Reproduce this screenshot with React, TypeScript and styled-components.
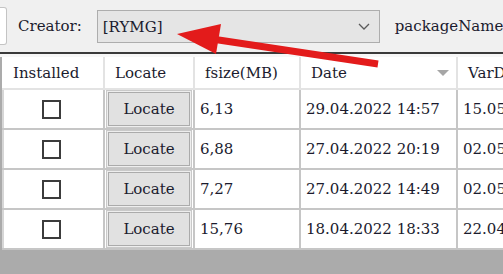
import { styled, createGlobalStyle } from "styled-components";

const GlobalStyle = createGlobalStyle`
  html, body {
    margin: 0;
    padding: 0;
    background: #ababab;
  }
  body {
    font-family: "DejaVu Serif", "Liberation Serif", serif;
    color: #1b1b2e;
  }
`;

const rows = [
  { size: "6,13", date: "29.04.2022 14:57", varDate: "15.05.2022" },
  { size: "6,88", date: "27.04.2022 20:19", varDate: "02.05.2022" },
  { size: "7,27", date: "27.04.2022 14:49", varDate: "02.05.2022" },
  { size: "15,76", date: "18.04.2022 18:33", varDate: "22.04.2022" },
];

const App = () => {
  return (
    <Page>
      <GlobalStyle />
      <Toolbar>
        <Stub />
        <Label>Creator:</Label>
        <Combo>
          <span>[RYMG]</span>
          <svg width="12" height="7" viewBox="0 0 12 7">
            <path d="M1 1 L6 6 L11 1" fill="none" stroke="#5a5a5a" strokeWidth="1.3" />
          </svg>
        </Combo>
        <Label className="pkg">packageName:</Label>
      </Toolbar>
      <Spacer />
      <Grid>
        <colgroup>
          <col style={{ width: 101 }} />
          <col style={{ width: 90 }} />
          <col style={{ width: 106 }} />
          <col style={{ width: 157 }} />
          <col style={{ width: 60 }} />
        </colgroup>
        <thead>
          <tr>
            <Head>Installed</Head>
            <Head>Locate</Head>
            <Head>fsize(MB)</Head>
            <Head>
              Date
              <SortArrow />
            </Head>
            <Head>VarDate</Head>
          </tr>
        </thead>
        <tbody>
          {rows.map((r) => (
            <tr key={r.date}>
              <Cell $center>
                <Check />
              </Cell>
              <Cell $center>
                <LocateButton>Locate</LocateButton>
              </Cell>
              <Cell>{r.size}</Cell>
              <Cell>{r.date}</Cell>
              <Cell>{r.varDate}</Cell>
            </tr>
          ))}
        </tbody>
      </Grid>
      <Arrow width="503" height="274" viewBox="0 0 503 274">
        <line x1="212" y1="39" x2="378" y2="64" stroke="#e31b1b" strokeWidth="7" />
        <polygon points="177,34 221,24 216,54" fill="#e31b1b" />
      </Arrow>
    </Page>
  );
};

export default App;

const Page = styled.div`
  position: relative;
  width: 503px;
  height: 274px;
  overflow: hidden;
  background: #ababab;
`;

const Toolbar = styled.div`
  height: 52px;
  display: flex;
  align-items: center;
  background: #f0f0f0;
  border-bottom: 2px solid #3a3a3a;
  white-space: nowrap;
  font-size: 15px;
  .pkg {
    margin-left: 15px;
  }
`;

const Stub = styled.div`
  width: 6px;
  height: 36px;
  background: #fff;
  border: 1px solid #c4c4c4;
  border-left: none;
  border-radius: 0 3px 3px 0;
  flex-shrink: 0;
`;

const Label = styled.span`
  margin-left: 11px;
  flex-shrink: 0;
`;

const Combo = styled.div`
  margin-left: 15px;
  flex-shrink: 0;
  display: flex;
  align-items: center;
  justify-content: space-between;
  padding: 0 9px 0 5px;
  box-sizing: border-box;
  width: 283px;
  height: 33px;
  background: #e5e5e5;
  border: 1px solid #adadad;
  span {
    padding-top: 1px;
  }
`;

const Spacer = styled.div`
  height: 3px;
  background: #f7f7f7;
`;

const Grid = styled.table`
  margin-left: 2px;
  border-collapse: collapse;
  table-layout: fixed;
  width: 514px;
  background: #fff;
  font-size: 15px;
  white-space: nowrap;
  tr:first-child td {
    border-top: none;
  }
`;

const Head = styled.th`
  position: relative;
  height: 31px;
  padding: 0 0 0 10px;
  text-align: left;
  font-weight: normal;
  border-right: 2px solid #e3e3e3;
  border-bottom: 2px solid #e3e3e3;
  overflow: hidden;
`;

const SortArrow = styled.span`
  position: absolute;
  right: 7px;
  top: 13px;
  width: 0;
  height: 0;
  border-left: 6px solid transparent;
  border-right: 6px solid transparent;
  border-top: 6px solid #a6a6a6;
`;

const Cell = styled.td<{ $center?: boolean }>`
  height: 38px;
  padding: 0 0 0 5px;
  text-align: ${(p) => (p.$center ? "center" : "left")};
  border: 2px solid #c6c6c6;
  overflow: hidden;
  ${(p) => p.$center && "padding: 0;"}
  &:first-child {
    border-left: 2px solid #d6d6d6;
  }
`;

const Check = styled.div`
  display: inline-block;
  vertical-align: middle;
  width: 15px;
  height: 15px;
  border: 2px solid #3c3c3c;
  background: #fff;
  margin-left: -5px;
`;

const LocateButton = styled.div`
  margin: 0 1px;
  height: 36px;
  display: flex;
  align-items: center;
  justify-content: center;
  background: #e1e1e1;
  border: 1px solid #c9c9c9;
  box-shadow: inset 0 0 0 1px #eeeeee, inset 0 0 0 2px #ababab;
`;

const Arrow = styled.svg`
  position: absolute;
  left: 0;
  top: 0;
  pointer-events: none;
`;
